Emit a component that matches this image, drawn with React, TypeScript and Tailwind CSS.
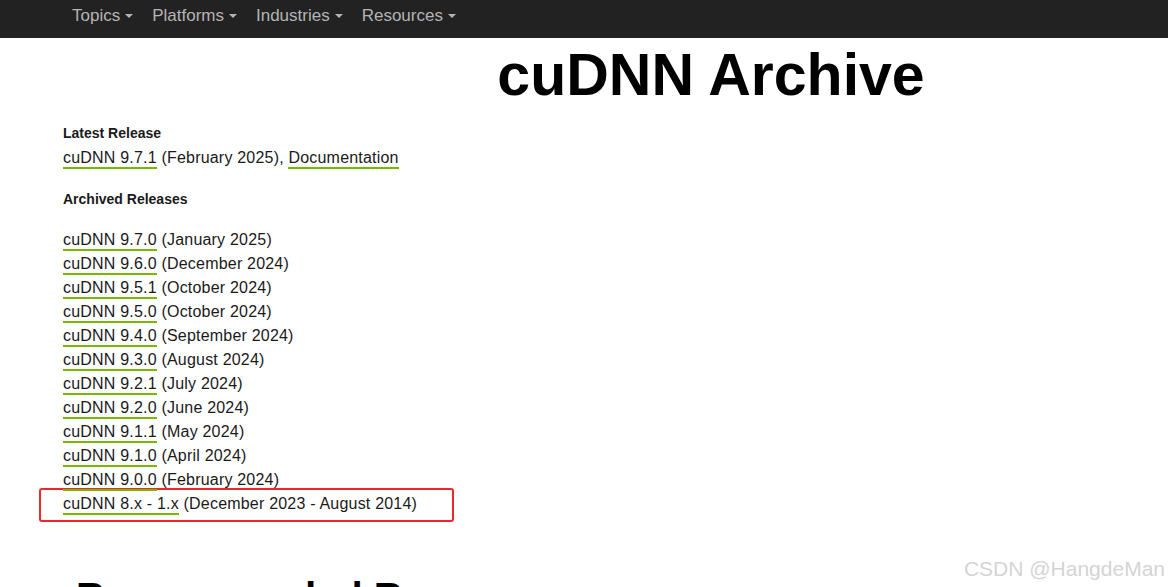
const releases = [
  { v: "9.7.0", d: "January 2025" },
  { v: "9.6.0", d: "December 2024" },
  { v: "9.5.1", d: "October 2024" },
  { v: "9.5.0", d: "October 2024" },
  { v: "9.4.0", d: "September 2024" },
  { v: "9.3.0", d: "August 2024" },
  { v: "9.2.1", d: "July 2024" },
  { v: "9.2.0", d: "June 2024" },
  { v: "9.1.1", d: "May 2024" },
  { v: "9.1.0", d: "April 2024" },
  { v: "9.0.0", d: "February 2024" },
];

const navItems = ["Topics", "Platforms", "Industries", "Resources"];

const Link = ({ children }: { children: React.ReactNode }) => (
  <a className="border-b-2 border-[#76b900] pb-[1px] text-[#1a1a1a]">{children}</a>
);

export default function App() {
  return (
    <div className="relative h-[587px] overflow-hidden bg-white font-['Liberation_Sans',sans-serif]">
      <nav className="flex h-[38px] items-start gap-[19px] bg-[#222222] pl-[72px] pt-[3px] text-[17px] text-[#b4b4b4]">
        {navItems.map((n) => (
          <span key={n} className="flex items-center gap-[5px]">
            {n}
            <span className="mt-[1px] h-0 w-0 border-x-[4px] border-t-[4px] border-x-transparent border-t-[#b4b4b4]" />
          </span>
        ))}
      </nav>

      <h1 className="mt-[5px] pl-[254px] text-center text-[59px] font-bold leading-[64px] text-black">
        cuDNN Archive
      </h1>

      <div className="pl-[63px] pt-[13px] text-[16px] leading-[24px] tracking-[0.2px] text-[#1a1a1a]">
        <h3 className="text-[14px] font-bold leading-[26px] tracking-normal">Latest Release</h3>
        <p>
          <Link>cuDNN 9.7.1</Link> (February 2025), <Link>Documentation</Link>
        </p>

        <h3 className="mt-[16px] text-[14px] font-bold leading-[26px] tracking-normal">Archived Releases</h3>
        <ul className="mt-[16px]">
          {releases.map((r) => (
            <li key={r.v}>
              <Link>cuDNN {r.v}</Link> ({r.d})
            </li>
          ))}
          <li className="-ml-[24px] -mt-[4px] h-[34px] w-[415px] rounded-[3px] border-2 border-[#f0262a] pl-[22px] pt-[2px]">
            <Link>cuDNN 8.x - 1.x</Link> (December 2023 - August 2014)
          </li>
        </ul>

        <h2 className="mt-[51px] pl-[13px] text-[40px] font-bold leading-[48px] tracking-normal text-black">
          Recommended Resources
        </h2>
      </div>

      <span className="absolute right-[3px] top-[553px] text-[21px] text-[#d4d4d4]">CSDN @HangdeMan</span>
    </div>
  );
}
